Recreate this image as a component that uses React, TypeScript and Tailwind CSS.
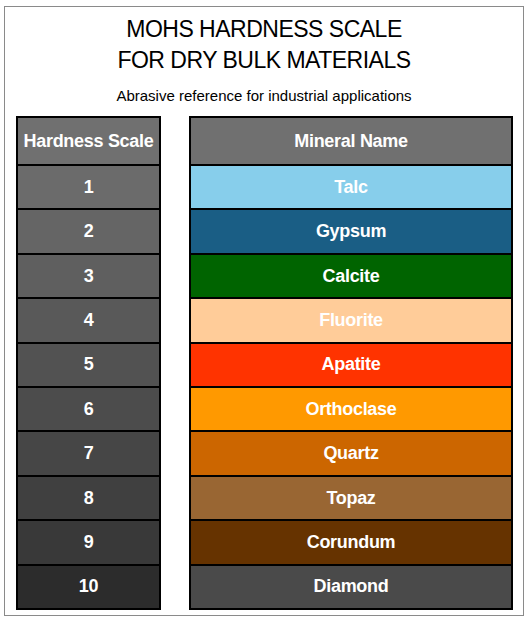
const scale = [
  { n: '1', bg: 'bg-[#6b6b6b]' },
  { n: '2', bg: 'bg-[#656565]' },
  { n: '3', bg: 'bg-[#5f5f5f]' },
  { n: '4', bg: 'bg-[#595959]' },
  { n: '5', bg: 'bg-[#525252]' },
  { n: '6', bg: 'bg-[#4c4c4c]' },
  { n: '7', bg: 'bg-[#464646]' },
  { n: '8', bg: 'bg-[#404040]' },
  { n: '9', bg: 'bg-[#393939]' },
  { n: '10', bg: 'bg-[#2c2c2c]' },
];

const minerals = [
  { name: 'Talc', bg: 'bg-[#87ceeb]' },
  { name: 'Gypsum', bg: 'bg-[#1a5e85]' },
  { name: 'Calcite', bg: 'bg-[#006400]' },
  { name: 'Fluorite', bg: 'bg-[#ffcc99]' },
  { name: 'Apatite', bg: 'bg-[#ff3300]' },
  { name: 'Orthoclase', bg: 'bg-[#ff9900]' },
  { name: 'Quartz', bg: 'bg-[#cc6600]' },
  { name: 'Topaz', bg: 'bg-[#996633]' },
  { name: 'Corundum', bg: 'bg-[#663300]' },
  { name: 'Diamond', bg: 'bg-[#4a4a4a]' },
];

const Column = ({
  title,
  rows,
  className,
}: {
  title: string;
  rows: { label: string; bg: string }[];
  className?: string;
}) => (
  <div className={`flex flex-col h-[494px] border-2 border-black ${className ?? ''}`}>
    <div className="h-[46px] flex items-center justify-center bg-[#707070]">{title}</div>
    {rows.map((r) => (
      <div key={r.label} className={`flex-1 flex items-center justify-center border-t-2 border-black ${r.bg}`}>
        {r.label}
      </div>
    ))}
  </div>
);

export default function App() {
  return (
    <div className="w-[529px] h-[622px] bg-white pt-[6px] pl-[4px] pr-[5px] pb-[6px] font-['Liberation_Sans',Arial,sans-serif]">
      <div className="h-full border border-[#8a8a8a] flex flex-col pt-[7px] px-[10px]">
        <div className="text-center text-black text-[23px] leading-[31px] tracking-[-0.5px]">
          <div>MOHS HARDNESS SCALE</div>
          <div>FOR DRY BULK MATERIALS</div>
        </div>
        <div className="mt-[10px] text-center text-black text-[15px] leading-[20px]">
          Abrasive reference for industrial applications
        </div>
        <div className="mt-[10px] flex gap-[28px] text-white font-bold text-[18px] tracking-[-0.3px]">
          <Column
            title="Hardness Scale"
            rows={scale.map((s) => ({ label: s.n, bg: s.bg }))}
            className="w-[145px] ml-px"
          />
          <Column
            title="Mineral Name"
            rows={minerals.map((m) => ({ label: m.name, bg: m.bg }))}
            className="w-[324px]"
          />
        </div>
      </div>
    </div>
  );
}
